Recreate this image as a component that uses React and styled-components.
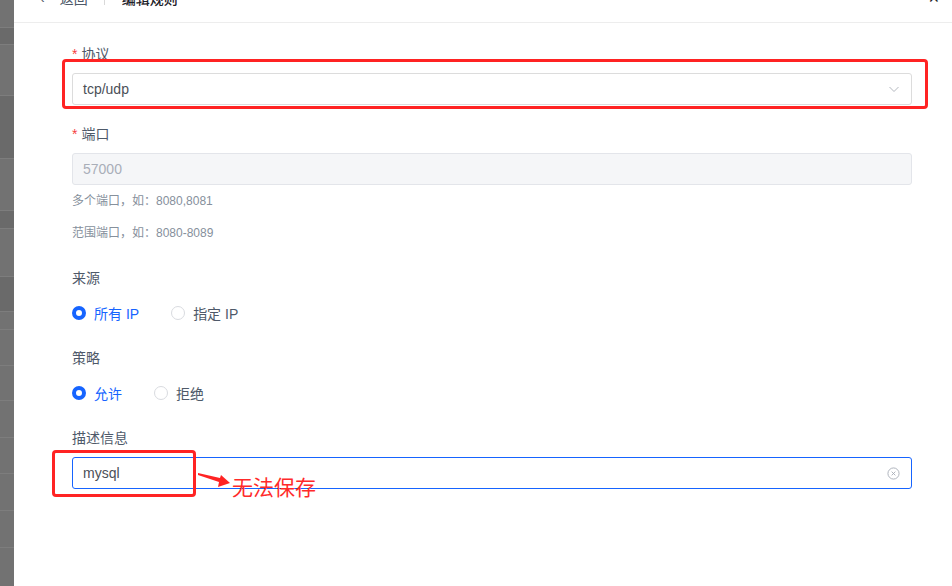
import React from 'react';
import styled, { createGlobalStyle } from 'styled-components';

const GlobalStyle = createGlobalStyle`
  html, body {
    margin: 0;
    padding: 0;
    overflow: hidden;
    background: #fff;
  }
  body {
    font-family: "Liberation Sans", "Noto Sans CJK SC", sans-serif;
  }
`;

const Page = styled.div`
  display: flex;
  height: 586px;
  overflow: hidden;
`;

const Mask = styled.div`
  width: 14px;
  flex-shrink: 0;
  display: flex;
  flex-direction: column;
  background: #727272;
`;

const MaskRow = styled.div`
  flex-shrink: 0;
  background: ${({ $dark }) => ($dark ? '#6a6a6a' : '#727272')};
  border-top: ${({ $first }) => ($first ? 'none' : '1px solid #7d7d7d')};
  box-sizing: border-box;
`;

const Drawer = styled.div`
  flex: 1;
  display: flex;
  flex-direction: column;
  margin-top: -22px;
  background: #fff;
`;

const Header = styled.div`
  height: 45px;
  box-sizing: border-box;
  flex-shrink: 0;
  display: flex;
  align-items: center;
  padding: 0 12px 5px 26px;
  border-bottom: 1px solid #ededed;
  font-size: 14px;
  color: #1d2129;
`;

const Back = styled.span`
  display: flex;
  align-items: center;
  gap: 15px;
  color: #4e5969;
`;

const Divider = styled.span`
  width: 1px;
  height: 14px;
  background: #d9d9d9;
  margin: 0 17px 0 16px;
`;

const Title = styled.span`
  flex: 1;
  font-weight: 500;
`;

const Body = styled.div`
  padding: 20px 40px 0 58px;
`;

const FormItem = styled.div`
  margin-bottom: 18px;
`;

const Label = styled.div`
  font-size: 14px;
  line-height: 22px;
  color: #4e5969;
  margin-bottom: 8px;
`;

const Required = styled.span`
  color: #f53f3f;
  margin-right: 4px;
`;

const FieldWrap = styled.div`
  position: relative;
`;

const Box = styled.div`
  height: 32px;
  box-sizing: border-box;
  display: flex;
  align-items: center;
  padding: 0 11px 0 10px;
  border: 1px solid ${({ $focus, $disabled }) => ($focus ? '#1664ff' : $disabled ? '#e3e5ea' : '#dcdcdc')};
  border-radius: 3px;
  background: ${({ $disabled }) => ($disabled ? '#f5f6f8' : '#fff')};
  font-size: 14px;
  color: ${({ $disabled }) => ($disabled ? '#a9aeb8' : '#4b4f57')};
`;

const Value = styled.span`
  flex: 1;
`;

const Tips = styled.div`
  display: flex;
  flex-direction: column;
  gap: 12px;
  padding: 6px 0 6px;
`;

const Tip = styled.div`
  font-size: 12px;
  line-height: 20px;
  color: #86909c;
`;

const RadioGroup = styled.div`
  height: 32px;
  display: flex;
  align-items: center;
  gap: 32px;
`;

const RadioOption = styled.label`
  display: flex;
  align-items: center;
  gap: 8px;
  font-size: 14px;
  color: ${({ $checked }) => ($checked ? '#1664ff' : '#4e5969')};
`;

const RadioDot = styled.span`
  width: 14px;
  height: 14px;
  box-sizing: border-box;
  border-radius: 50%;
  border: ${({ $checked }) => ($checked ? '4.5px solid #1664ff' : '1px solid #d9dbe0')};
  background: #fff;
`;

const RedBox = styled.div`
  position: absolute;
  border: 3px solid #ff2323;
  border-radius: 4px;
  pointer-events: none;
`;

const Note = styled.span`
  position: absolute;
  left: 160px;
  top: 17px;
  font-family: "Noto Sans CJK SC", sans-serif;
  font-size: 21px;
  line-height: 25px;
  color: #ff2a2a;
  white-space: nowrap;
`;

const Arrow = styled.svg`
  position: absolute;
  left: 126px;
  top: 14px;
`;

const maskRows = [
  [27, false], [17, true], [51, false], [63, true], [52, false], [18, true],
  [48, false], [35, true], [18, false], [36, false], [35, false], [37, false],
  [36, false], [37, false], [37, false], [39, false],
];

const Chevron = () => (
  <svg width="12" height="12" viewBox="0 0 12 12" fill="none">
    <path d="M1.5 4l4.5 4.5L10.5 4" stroke="#b4b8bf" strokeWidth="1" />
  </svg>
);

const ClearIcon = () => (
  <svg width="13" height="13" viewBox="0 0 14 14" fill="none">
    <circle cx="7" cy="7" r="6" stroke="#a9aeb8" strokeWidth="1" />
    <path d="M5 5l4 4M9 5l-4 4" stroke="#a9aeb8" strokeWidth="1" />
  </svg>
);

const Radio = ({ checked, children }) => (
  <RadioOption $checked={checked}>
    <RadioDot $checked={checked} />
    {children}
  </RadioOption>
);

const App = () => (
  <>
    <GlobalStyle />
    <Page>
      <Mask>
        {maskRows.map(([h, dark], i) => (
          <MaskRow key={i} $first={i === 0} $dark={dark} style={{ height: h }} />
        ))}
      </Mask>
      <Drawer>
        <Header>
          <Back>
            <span>‹</span>
            <span>返回</span>
          </Back>
          <Divider />
          <Title>编辑规则</Title>
          <span>✕</span>
        </Header>
        <Body>
          <FormItem>
            <Label><Required>*</Required>协议</Label>
            <FieldWrap>
              <Box>
                <Value>tcp/udp</Value>
                <Chevron />
              </Box>
              <RedBox style={{ left: -10, right: -16, top: -14, bottom: -4 }} />
            </FieldWrap>
          </FormItem>

          <FormItem>
            <Label><Required>*</Required>端口</Label>
            <Box $disabled>
              <Value>57000</Value>
            </Box>
            <Tips>
              <Tip>多个端口，如：8080,8081</Tip>
              <Tip>范围端口，如：8080-8089</Tip>
            </Tips>
          </FormItem>

          <FormItem>
            <Label>来源</Label>
            <RadioGroup>
              <Radio checked>所有 IP</Radio>
              <Radio>指定 IP</Radio>
            </RadioGroup>
          </FormItem>

          <FormItem>
            <Label>策略</Label>
            <RadioGroup>
              <Radio checked>允许</Radio>
              <Radio>拒绝</Radio>
            </RadioGroup>
          </FormItem>

          <FormItem>
            <Label>描述信息</Label>
            <FieldWrap>
              <Box $focus>
                <Value>mysql</Value>
                <ClearIcon />
              </Box>
              <RedBox style={{ left: -20, top: -7, width: 144, height: 47, boxSizing: 'border-box' }} />
              <Arrow width="36" height="20" viewBox="0 0 36 20">
                <polygon points="0,2 22,7 23,4 32,12 20,16 21,11 0,4" fill="#ff2323" />
              </Arrow>
              <Note>无法保存</Note>
            </FieldWrap>
          </FormItem>
        </Body>
      </Drawer>
    </Page>
  </>
);

export default App;
